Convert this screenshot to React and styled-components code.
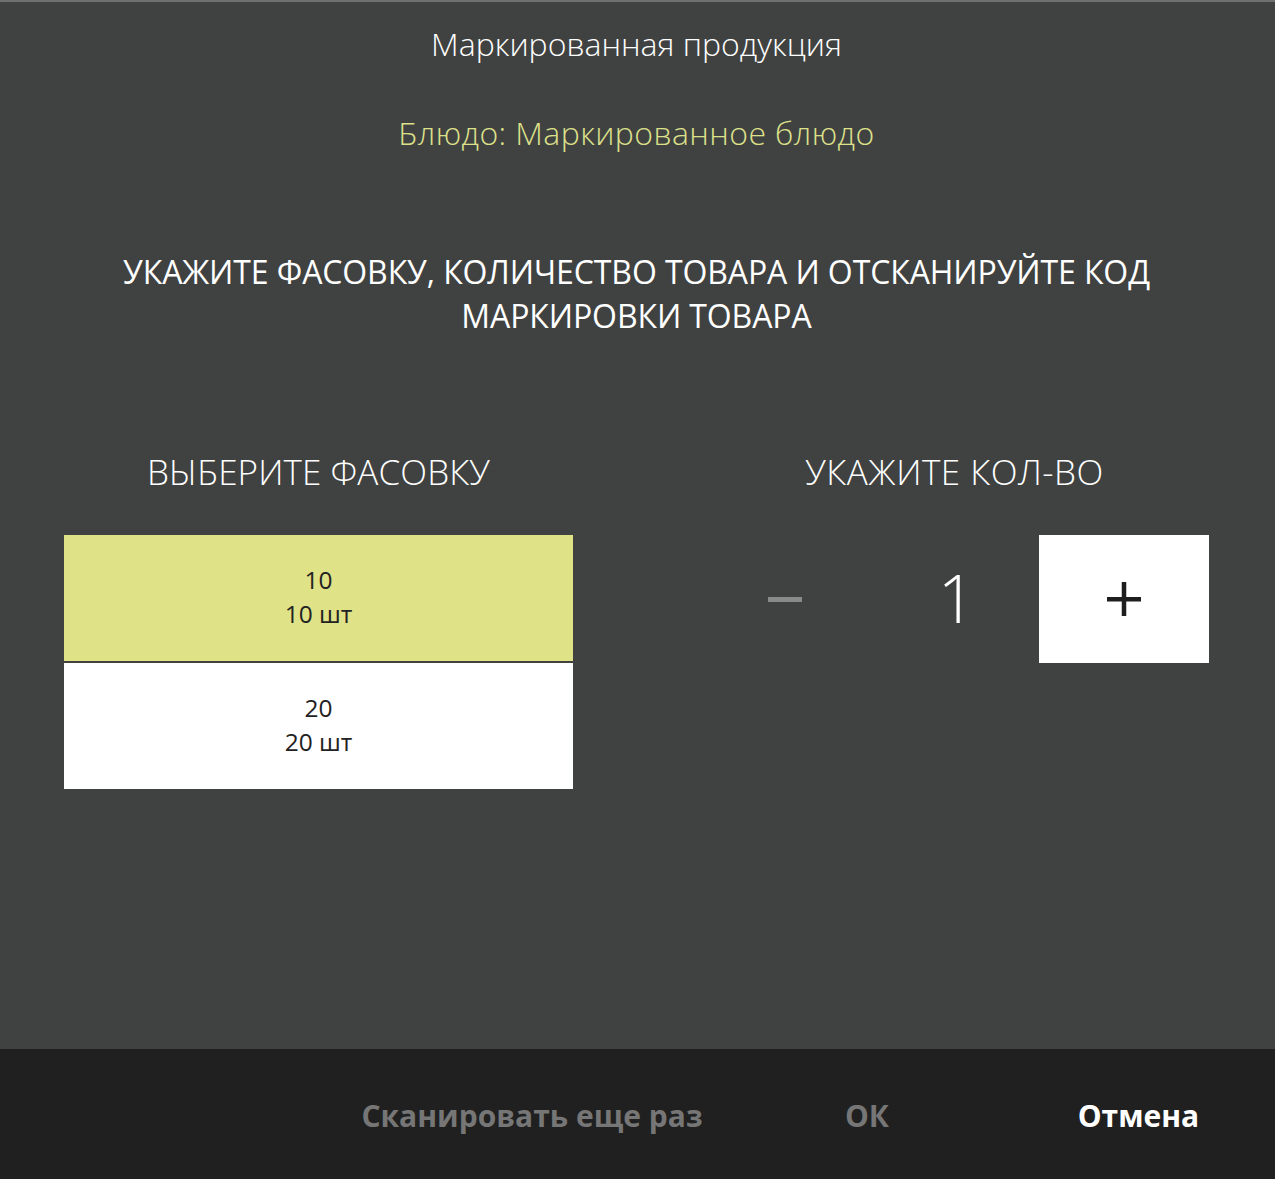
import React, { useState } from 'react'
import styled, { createGlobalStyle } from 'styled-components'

const GlobalStyle = createGlobalStyle`
  html, body {
    margin: 0;
    padding: 0;
    background: #404241;
  }
  * {
    box-sizing: border-box;
  }
`

const packs = [
    { id: 10, title: '10', label: '10 шт' },
    { id: 20, title: '20', label: '20 шт' }
]

export default function App() {
    const [activePack, setActivePack] = useState(10)
    const [count, setCount] = useState(1)

    return (
        <Screen>
            <GlobalStyle />
            <Content>
                <Title>Маркированная продукция</Title>
                <Dish>Блюдо: Маркированное блюдо</Dish>
                <Instruction>
                    УКАЖИТЕ ФАСОВКУ, КОЛИЧЕСТВО ТОВАРА И ОТСКАНИРУЙТЕ КОД
                    <br />
                    МАРКИРОВКИ ТОВАРА
                </Instruction>
                <Columns>
                    <Column>
                        <ColumnTitle>ВЫБЕРИТЕ ФАСОВКУ</ColumnTitle>
                        <PackList>
                            {packs.map(pack => (
                                <PackItem
                                    key={pack.id}
                                    $active={pack.id === activePack}
                                    onClick={() => setActivePack(pack.id)}
                                >
                                    <span>{pack.title}</span>
                                    <span>{pack.label}</span>
                                </PackItem>
                            ))}
                        </PackList>
                    </Column>
                    <Column>
                        <ColumnTitle $wide>УКАЖИТЕ КОЛ-ВО</ColumnTitle>
                        <Counter>
                            <StepButton
                                disabled={count <= 1}
                                onClick={() => setCount(c => Math.max(1, c - 1))}
                            >
                                <svg width='34' height='5' viewBox='0 0 34 5'>
                                    <rect x='0' y='0' width='34' height='5' fill='currentColor' />
                                </svg>
                            </StepButton>
                            <CountValue>{count}</CountValue>
                            <StepButton $filled onClick={() => setCount(c => c + 1)}>
                                <svg width='34' height='34' viewBox='0 0 34 34'>
                                    <rect x='0' y='15' width='34' height='4.5' fill='currentColor' />
                                    <rect x='14.75' y='0' width='4.5' height='34' fill='currentColor' />
                                </svg>
                            </StepButton>
                        </Counter>
                    </Column>
                </Columns>
            </Content>
            <Footer>
                <span />
                <FooterButton $muted>Сканировать еще раз</FooterButton>
                <FooterButton $muted>ОК</FooterButton>
                <FooterButton>Отмена</FooterButton>
            </Footer>
        </Screen>
    )
}

const Screen = styled.div`
  width: 1275px;
  height: 1179px;
  display: flex;
  flex-direction: column;
  background: #404241;
  border-top: 2px solid #6f7070;
  font-family: "Open Sans", "Noto Sans", sans-serif;
  color: #ffffff;
`

const Content = styled.div`
  flex: 1;
  display: flex;
  flex-direction: column;
  align-items: center;
  padding: 22px 66px 0 64px;
`

const Title = styled.div`
  font-size: 32px;
  font-weight: 300;
  line-height: 40px;
`

const Dish = styled.div`
  margin-top: 49px;
  font-size: 32px;
  font-weight: 300;
  line-height: 40px;
  letter-spacing: 0.4px;
  color: #dde08a;
`

const Instruction = styled.div`
  margin-top: 97px;
  font-size: 32px;
  font-weight: 400;
  line-height: 44px;
  letter-spacing: -0.1px;
  text-align: center;
`

const Columns = styled.div`
  width: 100%;
  margin-top: 112px;
  display: grid;
  grid-template-columns: 509px 509px;
  column-gap: 127px;
`

const Column = styled.div`
  display: flex;
  flex-direction: column;
  align-items: center;
`

const ColumnTitle = styled.div`
  font-size: 35px;
  font-weight: 300;
  line-height: 44px;
  letter-spacing: ${p => (p.$wide ? '0.5px' : '0.1px')};
  margin-bottom: 41px;
`

const PackList = styled.div`
  width: 100%;
  display: flex;
  flex-direction: column;
  gap: 2px;
`

const PackItem = styled.button`
  height: 126px;
  border: none;
  display: flex;
  flex-direction: column;
  align-items: center;
  justify-content: center;
  padding: 0 0 2px;
  background: ${p => (p.$active ? '#e0e287' : '#ffffff')};
  color: #222222;
  font-family: "Open Sans", "Noto Sans", sans-serif;
  font-size: 24.5px;
  line-height: 34px;
  cursor: pointer;
`

const Counter = styled.div`
  width: 100%;
  display: grid;
  grid-template-columns: repeat(3, 1fr);
  height: 128px;
`

const StepButton = styled.button`
  border: none;
  display: flex;
  align-items: center;
  justify-content: center;
  background: ${p => (p.$filled ? '#ffffff' : 'transparent')};
  color: ${p => (p.$filled ? '#1e1e1e' : '#8a8a8a')};
  padding: 0;
  cursor: pointer;
`

const CountValue = styled.div`
  display: flex;
  align-items: center;
  justify-content: center;
  font-size: 66px;
  font-weight: 300;
  padding: 0 0 4px 4px;
`

const Footer = styled.div`
  height: 130px;
  background: #202020;
  display: grid;
  grid-template-columns: 1fr 400px 270px 273px;
  align-items: center;
`

const FooterButton = styled.button`
  border: none;
  background: transparent;
  padding: 2px 0 0;
  font-family: "Open Sans", "Noto Sans", sans-serif;
  font-size: 30px;
  font-weight: 700;
  color: ${p => (p.$muted ? '#767676' : '#ffffff')};
  text-align: center;
  cursor: pointer;
`
